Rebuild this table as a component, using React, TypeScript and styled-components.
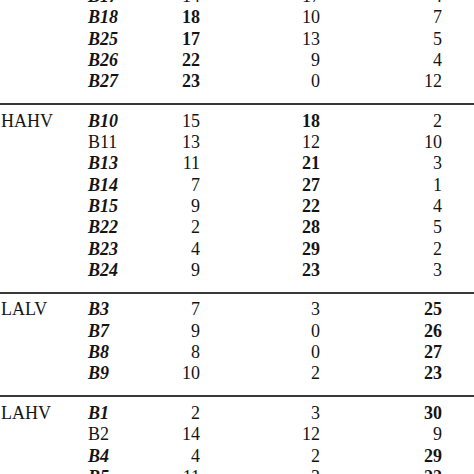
import React, { FC } from 'react'
import styled, { createGlobalStyle } from 'styled-components'

const Global = createGlobalStyle`
  html, body {
    margin: 0;
    padding: 0;
    background: #fff;
    overflow: hidden;
  }
  body {
    width: 474px;
    height: 474px;
  }
`

const Table = styled.div`
  width: 474px;
  margin-top: -14.7px;
  font-family: "Liberation Serif", "Times New Roman", serif;
  font-size: 18px;
  color: #141414;
`

const Group = styled.div<{ $ruled?: boolean }>`
  display: grid;
  grid-template-columns: 88px 60px 52px 120px 122px 32px;
  grid-auto-rows: 21.35px;
  align-items: center;
  padding: 5px 0 11px;
  border-top: ${(p) => (p.$ruled ? '2px solid #383838' : 'none')};
  &:first-child {
    padding-top: 0;
  }
`

const Label = styled.div`
  grid-column: 1;
  padding-left: 1px;
  line-height: 1;
`

const Name = styled.div<{ $em?: boolean }>`
  grid-column: 2;
  font-weight: ${(p) => (p.$em ? 700 : 400)};
  font-style: ${(p) => (p.$em ? 'italic' : 'normal')};
  line-height: 1;
`

const Num = styled.div<{ $bold?: boolean }>`
  text-align: right;
  font-weight: ${(p) => (p.$bold ? 700 : 400)};
  line-height: 1;
`

type Row = { name: string; em: boolean; vals: [number, number, number]; best?: number }
type GroupData = { label?: string; rows: Row[] }

const groups: GroupData[] = [
  {
    rows: [
      { name: 'B17', em: true, vals: [14, 17, 4] },
      { name: 'B18', em: true, vals: [18, 10, 7], best: 0 },
      { name: 'B25', em: true, vals: [17, 13, 5], best: 0 },
      { name: 'B26', em: true, vals: [22, 9, 4], best: 0 },
      { name: 'B27', em: true, vals: [23, 0, 12], best: 0 },
    ],
  },
  {
    label: 'HAHV',
    rows: [
      { name: 'B10', em: true, vals: [15, 18, 2], best: 1 },
      { name: 'B11', em: false, vals: [13, 12, 10] },
      { name: 'B13', em: true, vals: [11, 21, 3], best: 1 },
      { name: 'B14', em: true, vals: [7, 27, 1], best: 1 },
      { name: 'B15', em: true, vals: [9, 22, 4], best: 1 },
      { name: 'B22', em: true, vals: [2, 28, 5], best: 1 },
      { name: 'B23', em: true, vals: [4, 29, 2], best: 1 },
      { name: 'B24', em: true, vals: [9, 23, 3], best: 1 },
    ],
  },
  {
    label: 'LALV',
    rows: [
      { name: 'B3', em: true, vals: [7, 3, 25], best: 2 },
      { name: 'B7', em: true, vals: [9, 0, 26], best: 2 },
      { name: 'B8', em: true, vals: [8, 0, 27], best: 2 },
      { name: 'B9', em: true, vals: [10, 2, 23], best: 2 },
    ],
  },
  {
    label: 'LAHV',
    rows: [
      { name: 'B1', em: true, vals: [2, 3, 30], best: 2 },
      { name: 'B2', em: false, vals: [14, 12, 9] },
      { name: 'B4', em: true, vals: [4, 2, 29], best: 2 },
      { name: 'B5', em: true, vals: [11, 3, 22], best: 2 },
    ],
  },
]

const App: FC = () => (
  <>
    <Global />
    <Table>
      {groups.map((g, gi) => (
        <Group key={gi} $ruled={gi > 0}>
          {g.rows.map((r, ri) => (
            <React.Fragment key={r.name}>
              <Label>{ri === 0 ? g.label : null}</Label>
              <Name $em={r.em}>{r.name}</Name>
              {r.vals.map((v, vi) => (
                <Num key={vi} $bold={r.best === vi}>
                  {v}
                </Num>
              ))}
              <div />
            </React.Fragment>
          ))}
        </Group>
      ))}
    </Table>
  </>
)

export default App
